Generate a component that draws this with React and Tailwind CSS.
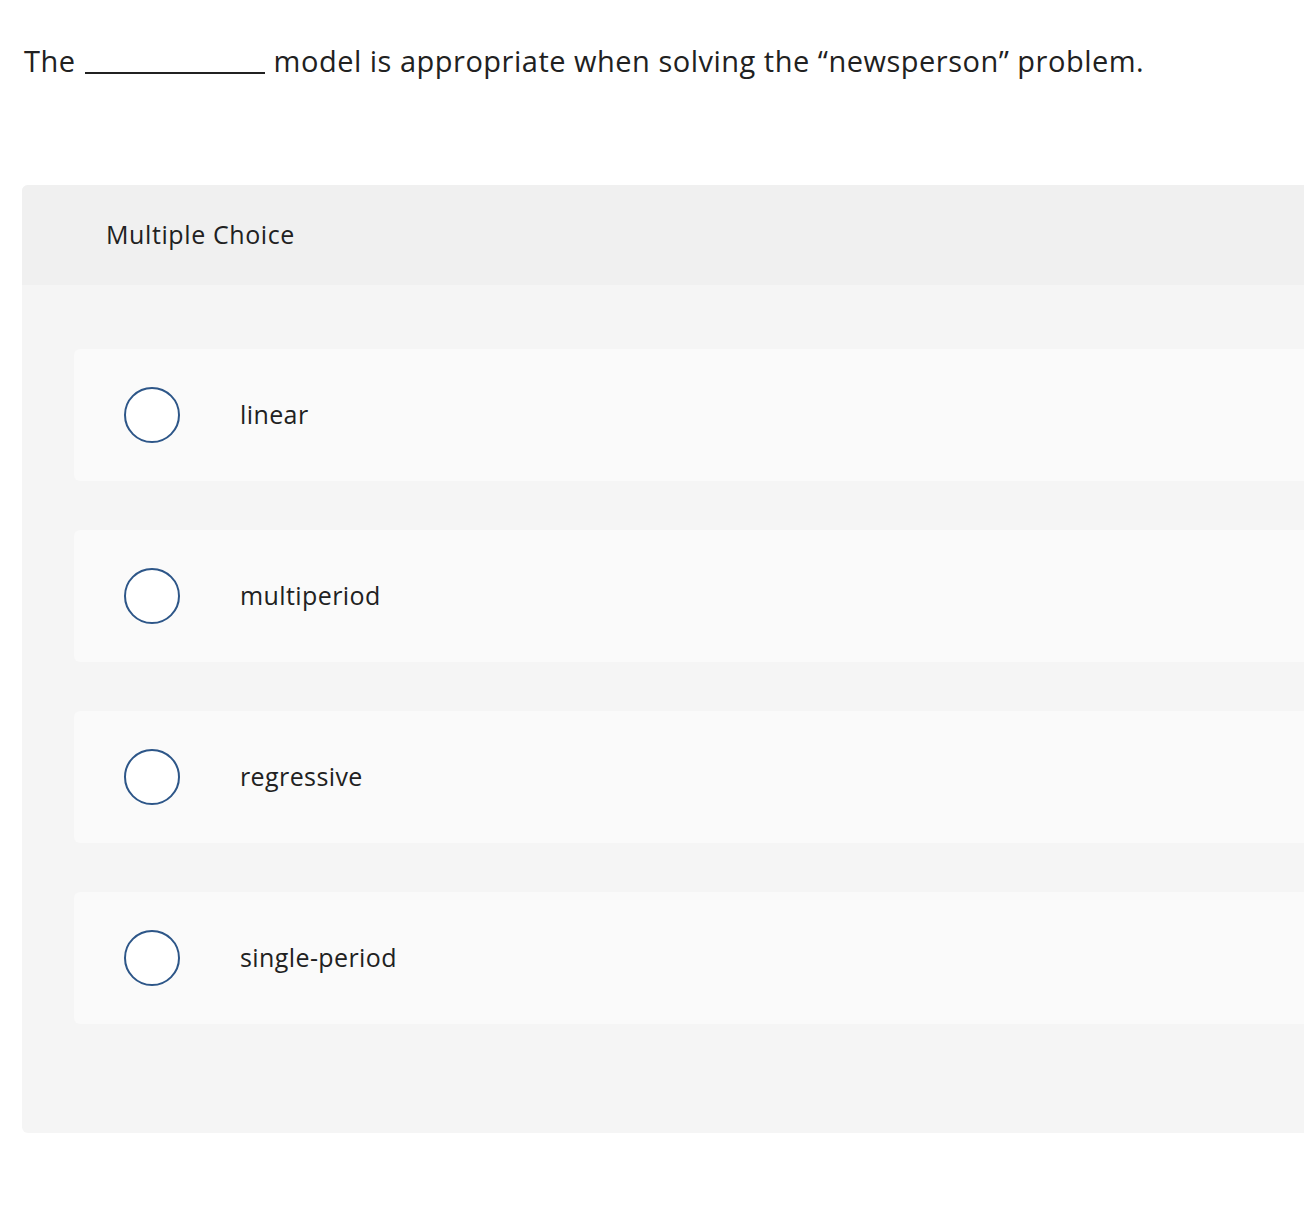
import React from "react";

const options = ["linear", "multiperiod", "regressive", "single-period"];

export default function App() {
  return (
    <div className="min-h-[1216px] w-[1304px] overflow-hidden bg-white text-[#212121]" style={{ fontFamily: "'Open Sans', Lato, sans-serif" }}>
      <div className="pl-6 pt-[41px] text-[29px] leading-[40px] tracking-[0.5px]">
        The <span className="mx-[1px] inline-block w-[180px] translate-y-[2px] border-b-2 border-[#212121] align-baseline"></span> model is appropriate when solving the “newsperson” problem.
      </div>
      <div className="ml-[22px] mt-[104px] w-[1320px] overflow-hidden rounded-md bg-[#f5f5f5]">
        <div className="flex h-[100px] items-center bg-[#f0f0f0] pl-[84px] text-[25px] tracking-[0.6px]">Multiple Choice</div>
        <div className="flex flex-col gap-[49px] pb-[109px] pl-[52px] pt-[64px]">
          {options.map((o) => (
            <div key={o} className="flex h-[132px] items-center rounded-md bg-[#fafafa] pl-[50px]">
              <div className="h-14 w-14 shrink-0 rounded-full border-2 border-[#2d5688] bg-white"></div>
              <span className="ml-[60px] text-[25px] tracking-[0.4px]">{o}</span>
            </div>
          ))}
        </div>
      </div>
    </div>
  );
}
